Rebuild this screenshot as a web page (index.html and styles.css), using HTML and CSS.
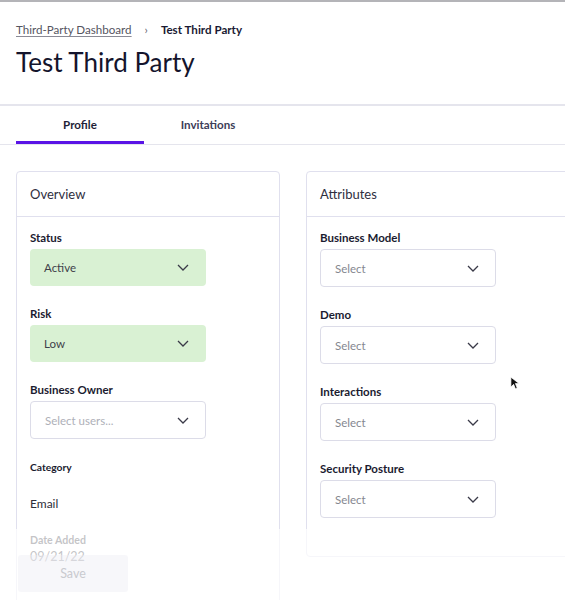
FILE: index.html
```html
<!DOCTYPE html>
<html lang="en">
<head>
<meta charset="utf-8">
<title>Test Third Party</title>
<link rel="stylesheet" href="styles.css">
</head>
<body>
<div class="page">
  <header class="page-header">
    <nav class="breadcrumb">
      <a class="crumb-link" href="#">Third-Party Dashboard</a>
      <span class="crumb-sep">›</span>
      <span class="crumb-current">Test Third Party</span>
    </nav>
    <h1 class="page-title">Test Third Party</h1>
  </header>

  <div class="tabs">
    <div class="tab tab-active">Profile</div>
    <div class="tab">Invitations</div>
  </div>

  <main class="cards">
    <section class="card card-overview">
      <div class="card-head">Overview</div>
      <div class="card-body">
        <div class="field">
          <div class="field-label">Status</div>
          <div class="select select-green"><span class="select-value">Active</span><svg class="chev" viewBox="0 0 12 7"><path d="M1 1l5 5 5-5"/></svg></div>
        </div>
        <div class="field">
          <div class="field-label">Risk</div>
          <div class="select select-green"><span class="select-value">Low</span><svg class="chev" viewBox="0 0 12 7"><path d="M1 1l5 5 5-5"/></svg></div>
        </div>
        <div class="field">
          <div class="field-label">Business Owner</div>
          <div class="select select-outline"><span class="select-ph-light">Select users...</span><svg class="chev" viewBox="0 0 12 7"><path d="M1 1l5 5 5-5"/></svg></div>
        </div>
        <div class="info">
          <div class="info-label">Category</div>
          <div class="info-value">Email</div>
        </div>
        <div class="info info-date">
          <div class="info-label info-label-plain">Date Added</div>
          <div class="info-value">09/21/22</div>
        </div>
      </div>
    </section>

    <section class="card card-attrs">
      <div class="card-head">Attributes</div>
      <div class="card-body">
        <div class="field">
          <div class="field-label">Business Model</div>
          <div class="select select-outline"><span class="select-ph">Select</span><svg class="chev" viewBox="0 0 12 7"><path d="M1 1l5 5 5-5"/></svg></div>
        </div>
        <div class="field">
          <div class="field-label">Demo</div>
          <div class="select select-outline"><span class="select-ph">Select</span><svg class="chev" viewBox="0 0 12 7"><path d="M1 1l5 5 5-5"/></svg></div>
        </div>
        <div class="field">
          <div class="field-label">Interactions</div>
          <div class="select select-outline"><span class="select-ph">Select</span><svg class="chev" viewBox="0 0 12 7"><path d="M1 1l5 5 5-5"/></svg></div>
        </div>
        <div class="field field-last">
          <div class="field-label">Security Posture</div>
          <div class="select select-outline"><span class="select-ph">Select</span><svg class="chev" viewBox="0 0 12 7"><path d="M1 1l5 5 5-5"/></svg></div>
        </div>
      </div>
    </section>
  </main>

  <div class="footer-fade">
    <button class="save-btn" type="button">Save</button>
  </div>

  <svg class="cursor" viewBox="0 0 10 15"><path d="M1 1v11l3-3 2 5 2-1-2-5h4z"/></svg>
</div>
</body>
</html>
```

FILE: styles.css
```css
* { box-sizing: border-box; }

html, body {
  margin: 0;
  padding: 0;
  background: #ffffff;
}

body {
  font-family: Lato, "Noto Sans", "Liberation Sans", sans-serif;
  color: #1b1b30;
  width: 565px;
  height: 600px;
  overflow: hidden;
}

.page {
  position: relative;
  width: 565px;
  height: 600px;
  overflow: hidden;
  border-top: 2px solid #b4b4b8;
}

.page-header {
  padding: 20px 16px 26px;
  border-bottom: 2px solid #e5e5ed;
}

.breadcrumb {
  display: flex;
  align-items: center;
  font-size: 11.6px;
  line-height: 16px;
}

.crumb-link {
  color: #55555f;
  text-decoration: underline;
  text-decoration-color: #8a8a95;
  text-underline-offset: 2px;
}

.crumb-sep {
  color: #66666f;
  margin: 0 13px 0 13px;
}

.crumb-current {
  color: #1a1a33;
  font-weight: 700;
}

.page-title {
  margin: 8px 0 0;
  font-size: 26px;
  line-height: 32px;
  font-weight: 400;
  color: #14142c;
}

.tabs {
  display: flex;
  padding-left: 16px;
  border-bottom: 1px solid #e5e5ed;
}

.tab {
  width: 128px;
  text-align: center;
  font-size: 11.6px;
  line-height: 16px;
  font-weight: 700;
  color: #3d3d58;
  padding: 11px 0 8px;
  border-bottom: 3px solid transparent;
}

.tab-active {
  color: #1f1f38;
  border-bottom-color: #5a14e6;
}

.cards {
  display: flex;
  align-items: flex-start;
  gap: 26px;
  padding: 26px 0 0 16px;
}

.card {
  flex: 0 0 264px;
  width: 264px;
  border: 1px solid #e0e0ee;
  border-radius: 4px;
  background: #fff;
}

.card-head {
  height: 45px;
  line-height: 44px;
  padding: 0 13px;
  font-size: 13px;
  color: #2e2e40;
  border-bottom: 1px solid #e0e0ee;
}

.card-body {
  padding: 13px 13px 38px;
}

.card-overview .card-body {
  padding-bottom: 120px;
}

.field {
  margin-bottom: 20px;
}

.field-last {
  margin-bottom: 0;
}

.field-label {
  font-size: 11.5px;
  line-height: 16px;
  font-weight: 700;
  color: #1b1b30;
  margin-bottom: 3px;
}

.select {
  width: 176px;
  display: flex;
  align-items: center;
  justify-content: space-between;
  border-radius: 4px;
  font-size: 11.5px;
}

.select-green {
  height: 37px;
  background: #d9f1d3;
  padding: 0 17px 0 14px;
}

.select-outline {
  height: 38px;
  border: 1px solid #dcdce8;
  padding: 0 16px 0 14px;
}

.select-value { color: #3f3f4a; }
.select-ph { color: #85878f; }
.select-ph-light { color: #aeb0b8; }

.chev {
  width: 12px;
  height: 7px;
  fill: none;
  stroke: #3a3a48;
  stroke-width: 1.3;
}

.info-label {
  font-size: 10.3px;
  line-height: 16px;
  font-weight: 700;
  color: #1b1b30;
  margin-bottom: 19px;
}

.info-value {
  font-size: 12px;
  line-height: 20px;
  color: #2e2e3a;
}

.info-date {
  margin-top: 18px;
}

.info-label-plain {
  font-weight: 700;
  font-size: 10.6px;
  color: #3a3a45;
  margin-bottom: 0;
}

.info-date .info-value {
  line-height: 18px;
  font-size: 12.5px;
  color: #3a3a45;
}

.footer-fade {
  position: absolute;
  left: 0;
  right: 0;
  top: 527px;
  bottom: 0;
  background: rgba(255, 255, 255, 0.7);
}

.save-btn {
  position: absolute;
  left: 18px;
  top: 26px;
  width: 110px;
  height: 37px;
  border: 0;
  border-radius: 3px;
  background: rgba(238, 238, 244, 0.45);
  color: #c9cacf;
  font-family: Lato, "Noto Sans", sans-serif;
  font-size: 12.5px;
  padding: 0 0 0 0;
}

.cursor {
  position: absolute;
  left: 510px;
  top: 374px;
  width: 9px;
  height: 14px;
  fill: #111;
  stroke: #fff;
  stroke-width: 0.8;
}
```
